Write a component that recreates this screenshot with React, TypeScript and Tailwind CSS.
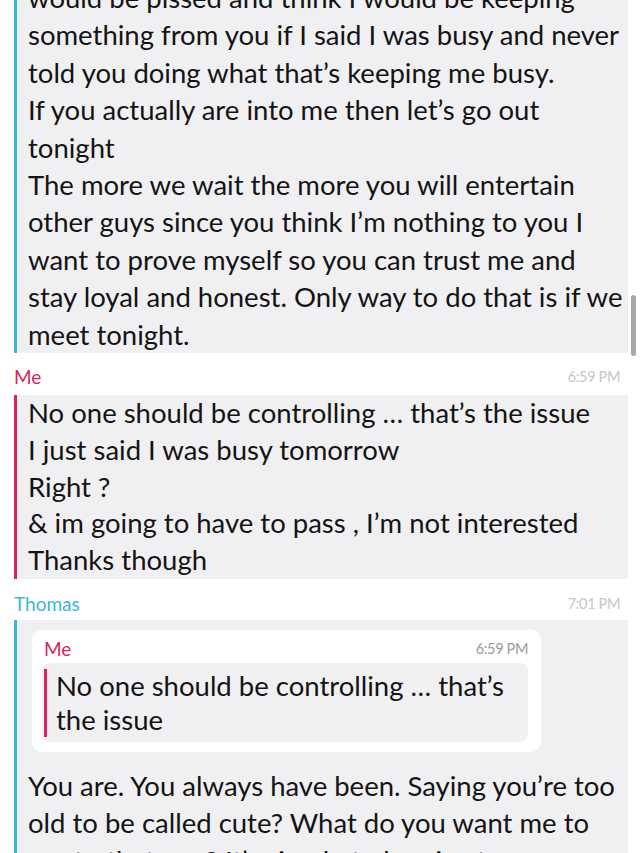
import React from 'react';

const font = { fontFamily: 'Lato, "Open Sans", sans-serif' };

function Header({ name, time, color }: { name: string; time: string; color: string }) {
  return (
    <div className="flex items-center justify-between pl-[14px] pr-[20px] h-[20px]">
      <span className={`text-[19px] leading-[20px] ${color}`}>{name}</span>
      <span className="text-[14.5px] leading-[20px] text-[#c6c6ca] tracking-tight">{time}</span>
    </div>
  );
}

function Block({ bar, children }: { bar: string; children: React.ReactNode }) {
  return (
    <div className={`ml-[14px] mr-[12px] bg-[#f0f0f3] border-l-[3px] ${bar} pl-[11px] pr-[8px]`}>
      {children}
    </div>
  );
}

export default function App() {
  const thomasLines = [
    'would be pissed and think I would be keeping',
    'something from you if I said I was busy and never',
    'told you doing what that’s keeping me busy.',
    'If you actually are into me then let’s go out',
    'tonight',
    'The more we wait the more you will entertain',
    'other guys since you think I’m nothing to you I',
    'want to prove myself so you can trust me and',
    'stay loyal and honest. Only way to do that is if we',
    'meet tonight.',
  ];
  const meLines = [
    'No one should be controlling … that’s the issue',
    'I just said I was busy tomorrow',
    'Right ?',
    '& im going to have to pass , I’m not interested',
    'Thanks though',
  ];
  const replyLines = [
    'You are. You always have been. Saying you’re too',
    'old to be called cute? What do you want me to',
    'say to that you? It’s simple to be nice to',
  ];

  return (
    <div className="relative w-[640px] h-[853px] overflow-hidden bg-white text-[#141414]" style={font}>
      <div className="-mt-[21px]">
        <Block bar="border-[#3cb4e0]">
          <div className="text-[27.5px] leading-[37.4px]">
            {thomasLines.map((l, i) => (
              <div key={i} className="whitespace-nowrap">{l}</div>
            ))}
          </div>
        </Block>

        <div className="pt-[14px] pb-[8px]">
          <Header name="Me" time="6:59 PM" color="text-[#d6245a]" />
        </div>
        <Block bar="border-[#d6245a]">
          <div className="text-[27.5px] leading-[36.8px]">
            {meLines.map((l, i) => (
              <div key={i} className="whitespace-nowrap">{l}</div>
            ))}
          </div>
        </Block>

        <div className="pt-[15px] pb-[6px]">
          <Header name="Thomas" time="7:01 PM" color="text-[#3cb4e0]" />
        </div>
        <Block bar="border-[#3cb4e0]">
          <div className="pt-[10px] pr-[79px] pl-[4px]">
            <div className="bg-white rounded-[10px] pl-[10px] pr-[13px] pt-[9px] pb-[10px]">
              <div className="flex items-center justify-between pl-[2px] h-[20px]">
                <span className="text-[19px] leading-[20px] text-[#d6245a]">Me</span>
                <span className="text-[14.5px] leading-[20px] text-[#9a9a9e] tracking-tight">6:59 PM</span>
              </div>
              <div className="mt-[4px] bg-[#f0f0f3] rounded-[8px] pl-[2px] pt-[6px] pb-[5px]">
                <div className="border-l-[3px] border-[#d6245a] pl-[9px] text-[27.5px] leading-[34px]">
                  <div className="whitespace-nowrap">No one should be controlling … that’s</div>
                  <div>the issue</div>
                </div>
              </div>
            </div>
          </div>
          <div className="text-[27.5px] leading-[37.4px] pt-[15px] pb-[10px]">
            {replyLines.map((l, i) => (
              <div key={i} className="whitespace-nowrap">{l}</div>
            ))}
          </div>
        </Block>
      </div>
      <div className="absolute left-[631px] top-[295px] w-[5px] h-[61px] rounded-full bg-[#a8a8ac]" />
    </div>
  );
}
